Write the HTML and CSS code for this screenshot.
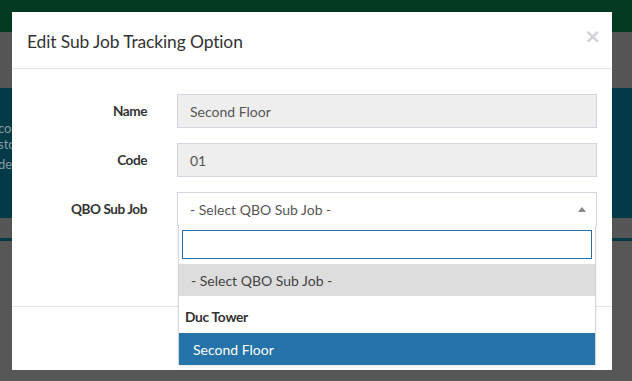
FILE: index.html
```html
<!DOCTYPE html>
<html>
<head>
<meta charset="utf-8">
<link rel="stylesheet" href="styles.css">
</head>
<body>
<div class="page">
  <div class="bg-green"></div>
  <div class="bg-gray"></div>
  <div class="bg-teal">
    <span class="frag f1">co</span>
    <span class="frag f2">sto</span>
    <span class="frag f3">de</span>
  </div>
  <div class="bg-gray2"></div>
  <div class="bg-line"></div>
  <div class="bg-rest"></div>
</div>
<div class="modal">
  <div class="modal-header">
    <h4 class="modal-title">Edit Sub Job Tracking Option</h4>
    <span class="close">&times;</span>
  </div>
  <div class="modal-body">
    <div class="form-row">
      <label class="label">Name</label>
      <div class="input disabled">Second Floor</div>
    </div>
    <div class="form-row">
      <label class="label">Code</label>
      <div class="input disabled">01</div>
    </div>
    <div class="form-row">
      <label class="label">QBO Sub Job</label>
      <div class="select-wrap">
        <div class="input select">
          <span>- Select QBO Sub Job -</span>
          <span class="arrow"></span>
        </div>
        <div class="dropdown">
          <div class="search-wrap"><div class="search"></div></div>
          <div class="opt opt-hl">- Select QBO Sub Job -</div>
          <div class="opt-group">Duc Tower</div>
          <div class="opt opt-sel">Second Floor</div>
        </div>
      </div>
    </div>
  </div>
  <div class="modal-footer"></div>
</div>
</body>
</html>
```
FILE: styles.css
```css
* { box-sizing: border-box; }
html, body { margin: 0; padding: 0; }
body {
  width: 632px;
  height: 381px;
  overflow: hidden;
  background: #555555;
  font-family: "Source Sans Pro", "Lato", "Noto Sans", sans-serif;
  position: relative;
}
.page { display: flex; flex-direction: column; height: 381px; }
.bg-green { height: 32px; background: #013a21; }
.bg-gray { height: 56px; background: #565656; }
.bg-teal { height: 130px; background: #033a48; position: relative; }
.bg-gray2 { height: 20px; background: #565656; }
.bg-line { height: 3px; background: #033a48; }
.bg-rest { flex: 1; background: #575757; }
.frag { position: absolute; left: -2px; color: #8a9aa0; font-size: 13px; line-height: 14px; }
.f1 { top: 33px; }
.f2 { top: 49px; }
.f3 { top: 69px; }

.modal {
  position: absolute;
  left: 12px;
  top: 12px;
  width: 600px;
  height: 358px;
  background: #ffffff;
  display: flex;
  flex-direction: column;
}
.modal-header {
  height: 57px;
  border-bottom: 1px solid #e1e3e8;
  display: flex;
  align-items: center;
  justify-content: space-between;
  padding: 0 15px;
}
.modal-title {
  margin: 0;
  font-size: 17.4px;
  font-weight: 400;
  color: #333333;
  padding-top: 2px;
  letter-spacing: -0.1px;
}
.close {
  font-size: 20px;
  color: #d0d2d7;
  font-family: "DejaVu Sans", sans-serif;
  font-weight: 700;
  margin-top: -8px;
  margin-right: -4px;
}
.modal-body {
  height: 237px;
  padding: 25px 15px 0 15px;
  display: flex;
  flex-direction: column;
  gap: 15px;
}
.form-row {
  display: grid;
  grid-template-columns: 120px 420px;
  column-gap: 30px;
  align-items: center;
}
.label {
  text-align: right;
  font-weight: 700;
  font-size: 13.6px;
  letter-spacing: -0.45px;
  color: #333333;
}
.input {
  height: 34px;
  border: 1px solid #d2d6de;
  padding: 0 12px;
  font-size: 14px;
  color: #555555;
  display: flex;
  align-items: center;
}
.disabled { background: #eeeeee; }
.select-wrap { position: relative; }
.select {
  background: #ffffff;
  justify-content: space-between;
  padding-right: 10px;
}
.arrow {
  width: 0;
  height: 0;
  border-left: 4px solid transparent;
  border-right: 4px solid transparent;
  border-bottom: 5px solid #888888;
  margin-top: 1px;
}
.dropdown {
  position: absolute;
  top: 33px;
  left: 1px;
  width: 418px;
  background: #ffffff;
  border-left: 1px solid #d2d6de;
  border-right: 1px solid #d2d6de;
  box-shadow: 0 2px 3px rgba(0,0,0,0.08);
  font-size: 14px;
}
.search-wrap { padding: 5px 3px 5px 3px; height: 39px; }
.search {
  height: 29px;
  border: 1px solid #2c6fa5;
  background: #fff;
}
.opt {
  height: 32px;
  padding: 0 12px;
  display: flex;
  align-items: center;
  color: #444444;
}
.opt-hl { background: #dddddd; }
.opt-group {
  height: 37px;
  padding: 4px 6px 0 6px;
  display: flex;
  align-items: center;
  font-weight: 700;
  font-size: 13.8px;
  letter-spacing: -0.3px;
  color: #333333;
}
.opt-sel {
  background: #2573a8;
  color: #ffffff;
  padding-left: 14px;
}
.modal-footer {
  border-top: 1px solid #e1e3e8;
  flex: 1;
}
```
